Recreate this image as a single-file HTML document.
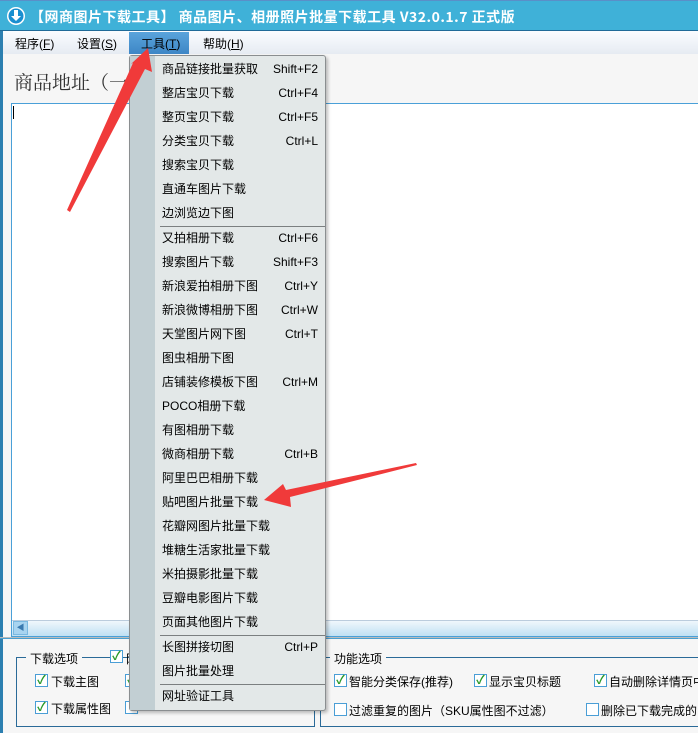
<!DOCTYPE html>
<html><head><meta charset="utf-8"><style>
*{margin:0;padding:0;box-sizing:border-box}
body{width:698px;height:733px;overflow:hidden;background:#f6f6f6;font-family:"Liberation Sans","Noto Sans CJK SC",sans-serif;font-size:12px;color:#000;position:relative}
.abs{position:absolute}
#title{left:0;top:0;width:698px;height:31px;background:#3fb1d8;border-top:1px solid #5a8fc8;border-bottom:1px solid #1f6a98}
#title span{position:absolute;left:30px;top:6px;color:#fff;font-weight:bold;font-size:14px;font-family:"Noto Sans CJK SC",sans-serif;letter-spacing:0.5px;white-space:nowrap}
#menubar{left:2px;top:31px;width:696px;height:23px;background:linear-gradient(#fafcff,#e6ebf2)}
.mi{position:absolute;top:35px;font-size:12px}
#sel{left:129px;top:32px;width:60px;height:22px;background:linear-gradient(#5aa4dc,#3d86c6)}
#lb{left:0;top:31px;width:3px;height:702px;background:#2c7fb0}
#ta{left:11px;top:103px;width:687px;height:534px;background:#fff;border:1px solid #4aa0d8;border-right:none}
#sb{left:12px;top:620px;width:686px;height:16px;background:linear-gradient(#f0f7fc,#bfe0f3);border-top:1px solid #bcd}
#menu{left:129px;top:55px;width:197px;height:656px;background:#e3e8e8;border:1px solid #8a8e90;border-radius:3px;box-shadow:2px 2px 3px rgba(0,0,0,.25)}
#gut{left:130px;top:56px;width:25px;height:654px;background:#c2cfd3}
.it{position:absolute;left:162px;font-size:12px;line-height:14px;white-space:nowrap}
.sc{position:absolute;right:380px;font-size:12px;line-height:14px;text-align:right}
.sep{position:absolute;left:160px;width:165px;height:1px;background:#7b7f80}
.grp{position:absolute;border:1px solid #2a6a98}
.cb{position:absolute;width:13px;height:13px;border:1px solid #4a9ed6;background:#fff;font-size:12px;line-height:11px;color:#2a9a2a;text-align:center;font-weight:bold}
.lbl{position:absolute;font-size:12px;white-space:nowrap}
</style></head><body>
<div id="title" class="abs"><svg class="abs" style="left:6px;top:5px" width="20" height="20"><circle cx="10" cy="10" r="9" fill="#fff"/><circle cx="10" cy="10" r="7.5" fill="#1a8fd0"/><path d="M8 4h4v6h3l-5 5-5-5h3z" fill="#fff"/></svg><span>【网商图片下载工具】 商品图片、相册照片批量下载工具 V32.0.1.7 正式版</span></div>
<div id="menubar" class="abs"></div>
<div id="lb" class="abs"></div>
<div id="sel" class="abs"></div>
<div class="mi" style="left:15px">程序(<u>F</u>)</div>
<div class="mi" style="left:77px">设置(<u>S</u>)</div>
<div class="mi" style="left:141px">工具(<u>T</u>)</div>
<div class="mi" style="left:203px">帮助(<u>H</u>)</div>
<div class="abs" style="left:14px;top:68px;font-size:19px;color:#333;font-family:'Noto Serif CJK SC',serif;white-space:nowrap">商品地址（一</div>
<div id="ta" class="abs"></div>
<div class="abs" style="left:13px;top:106px;width:1px;height:13px;background:#000"></div>
<div id="sb" class="abs"></div>
<div class="abs" style="left:13px;top:621px;width:15px;height:14px;background:#a8d4f0;border:1px solid #7ab8e0;color:#3a7ab0;font-size:8px;line-height:12px;text-align:center">◀</div>
<div class="abs" style="left:0;top:637px;width:698px;height:1px;background:#bbb"></div>
<div class="abs" style="left:0;top:638px;width:698px;height:1px;background:#4aa0d0"></div>

<div class="grp" style="left:16px;top:657px;width:299px;height:70px"></div>
<div class="lbl" style="left:26px;top:650px;background:#f6f6f6;padding:0 4px">下载选项</div>
<div class="cb" style="left:110px;top:650px">✓</div><div class="lbl" style="left:126px;top:650px">网</div>
<div class="cb" style="left:35px;top:674px">✓</div><div class="lbl" style="left:51px;top:673px">下载主图</div>
<div class="cb" style="left:125px;top:674px">✓</div>
<div class="cb" style="left:35px;top:701px">✓</div><div class="lbl" style="left:51px;top:700px">下载属性图</div>
<div class="cb" style="left:125px;top:701px"></div>
<div class="grp" style="left:320px;top:657px;width:390px;height:70px"></div>
<div class="lbl" style="left:330px;top:650px;background:#f6f6f6;padding:0 4px">功能选项</div>
<div class="cb" style="left:334px;top:674px">✓</div><div class="lbl" style="left:349px;top:673px">智能分类保存(推荐)</div>
<div class="cb" style="left:474px;top:674px">✓</div><div class="lbl" style="left:489px;top:673px">显示宝贝标题</div>
<div class="cb" style="left:594px;top:674px">✓</div><div class="lbl" style="left:609px;top:673px">自动删除详情页中</div>
<div class="cb" style="left:334px;top:703px"></div><div class="lbl" style="left:349px;top:702px">过滤重复的图片（SKU属性图不过滤）</div>
<div class="cb" style="left:586px;top:703px"></div><div class="lbl" style="left:601px;top:702px">删除已下载完成的</div>

<div id="menu" class="abs"></div>
<div id="gut" class="abs"></div>
<div class="it" style="top:62px">商品链接批量获取</div><div class="sc" style="top:62px">Shift+F2</div>
<div class="it" style="top:86px">整店宝贝下载</div><div class="sc" style="top:86px">Ctrl+F4</div>
<div class="it" style="top:110px">整页宝贝下载</div><div class="sc" style="top:110px">Ctrl+F5</div>
<div class="it" style="top:134px">分类宝贝下载</div><div class="sc" style="top:134px">Ctrl+L</div>
<div class="it" style="top:158px">搜索宝贝下载</div>
<div class="it" style="top:182px">直通车图片下载</div>
<div class="it" style="top:206px">边浏览边下图</div>
<div class="sep" style="top:226px"></div>
<div class="it" style="top:231px">又拍相册下载</div><div class="sc" style="top:231px">Ctrl+F6</div>
<div class="it" style="top:255px">搜索图片下载</div><div class="sc" style="top:255px">Shift+F3</div>
<div class="it" style="top:279px">新浪爱拍相册下图</div><div class="sc" style="top:279px">Ctrl+Y</div>
<div class="it" style="top:303px">新浪微博相册下图</div><div class="sc" style="top:303px">Ctrl+W</div>
<div class="it" style="top:327px">天堂图片网下图</div><div class="sc" style="top:327px">Ctrl+T</div>
<div class="it" style="top:351px">图虫相册下图</div>
<div class="it" style="top:375px">店铺装修模板下图</div><div class="sc" style="top:375px">Ctrl+M</div>
<div class="it" style="top:399px">POCO相册下载</div>
<div class="it" style="top:423px">有图相册下载</div>
<div class="it" style="top:447px">微商相册下载</div><div class="sc" style="top:447px">Ctrl+B</div>
<div class="it" style="top:471px">阿里巴巴相册下载</div>
<div class="it" style="top:495px">贴吧图片批量下载</div>
<div class="it" style="top:519px">花瓣网图片批量下载</div>
<div class="it" style="top:543px">堆糖生活家批量下载</div>
<div class="it" style="top:567px">米拍摄影批量下载</div>
<div class="it" style="top:591px">豆瓣电影图片下载</div>
<div class="it" style="top:615px">页面其他图片下载</div>
<div class="sep" style="top:635px"></div>
<div class="it" style="top:640px">长图拼接切图</div><div class="sc" style="top:640px">Ctrl+P</div>
<div class="it" style="top:664px">图片批量处理</div>
<div class="sep" style="top:684px"></div>
<div class="it" style="top:689px">网址验证工具</div>

<svg class="abs" style="left:0;top:0" width="698" height="733">
<polygon points="148,48 152,72 145,69 70,212 67,210 133,63 131,64" fill="#f03a3a"/>
<polygon points="264,500 283,484 286,490 416,463 417,465 290,497 291,507" fill="#f03a3a"/>
</svg>
</body></html>
